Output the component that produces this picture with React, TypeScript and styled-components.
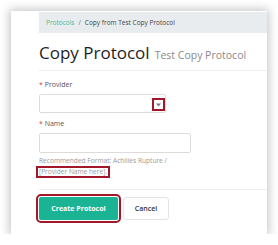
import styled, { createGlobalStyle } from "styled-components";

const GlobalStyle = createGlobalStyle`
    html, body {
        margin: 0;
        padding: 0;
        background: #ffffff;
        font-family: "Open Sans", "Liberation Sans", sans-serif;
    }
`

const annotation = '#a3172a'

export default function App() {
    return (
        <>
            <GlobalStyle />
            <Card>
                <Breadcrumb>
                    <CrumbLink>Protocols</CrumbLink>
                    <CrumbSep>/</CrumbSep>
                    <span>Copy from Test Copy Protocol</span>
                </Breadcrumb>
                <TitleRow>
                    <Title>Copy Protocol</Title>
                    <SubTitle>Test Copy Protocol</SubTitle>
                </TitleRow>
                <Divider $top={3} />
                <Field $top={9}>
                    <Label><Req>*</Req> Provider</Label>
                    <Select $width={127}>
                        <ArrowMark>
                            <svg width="5" height="4" viewBox="0 0 5 4"><path d="M0 0.5 L5 0.5 L2.5 3.5 Z" fill="#777" /></svg>
                        </ArrowMark>
                    </Select>
                </Field>
                <Field $top={6}>
                    <Label><Req>*</Req> Name</Label>
                    <Input $width={152} />
                </Field>
                <Help>
                    <div>Recommended Format: Achilles Rupture /</div>
                    <Marked>[Provider Name here].</Marked>
                </Help>
                <Divider $top={11} />
                <Actions>
                    <PrimaryButton>Create Protocol</PrimaryButton>
                    <DefaultButton>Cancel</DefaultButton>
                </Actions>
            </Card>
        </>
    )
}

const Card = styled.div`
    box-sizing: border-box;
    margin: 11px 0 0 11px;
    width: 256px;
    height: 223px;
    padding: 1px 0 0 28px;
    background: #ffffff;
    box-shadow: 0 0 9px 2px rgba(0, 0, 0, 0.22);
    display: flex;
    flex-direction: column;
`

const Breadcrumb = styled.div`
    height: 21px;
    background: #e9ecef;
    display: flex;
    align-items: center;
    padding-left: 7px;
    font-size: 6.5px;
    color: #444;
`

const CrumbLink = styled.span`
    color: #3fb994;
`

const CrumbSep = styled.span`
    color: #777;
    margin: 0 4px;
`

const TitleRow = styled.div`
    display: flex;
    align-items: baseline;
    gap: 5px;
    margin-top: 8px;
    line-height: 23px;
`

const Title = styled.h1`
    margin: 0;
    font-size: 17px;
    font-weight: 400;
    color: #1e1e1e;
`

const SubTitle = styled.span`
    font-size: 10.5px;
    color: #8a8a8a;
`

const Divider = styled.div<{ $top?: number }>`
    height: 1px;
    background: #eeeeee;
    margin-top: ${p => p.$top ?? 5}px;
`

const Field = styled.div<{ $top: number }>`
    display: flex;
    flex-direction: column;
    gap: 4px;
    margin-top: ${p => p.$top}px;
`

const Label = styled.label`
    font-size: 7px;
    line-height: 10px;
    color: #555;
`

const Req = styled.span`
    color: #e0433c;
`

const Select = styled.div<{ $width: number }>`
    position: relative;
    box-sizing: border-box;
    width: ${p => p.$width}px;
    height: 19px;
    border: 1px solid #dcdcdc;
    border-radius: 2px;
    background: #fff;
`

const ArrowMark = styled.div`
    position: absolute;
    right: 0;
    top: 3px;
    box-sizing: border-box;
    width: 13px;
    height: 13px;
    border: 2px solid ${annotation};
    display: flex;
    align-items: center;
    justify-content: center;
`

const Input = styled.div<{ $width: number }>`
    box-sizing: border-box;
    width: ${p => p.$width}px;
    height: 20px;
    border: 1px solid #dcdcdc;
    border-radius: 2px;
    background: #fff;
`

const Help = styled.div`
    margin-top: 3px;
    font-size: 6.6px;
    line-height: 10px;
    color: #9a9a9a;
`

const Marked = styled.span`
    display: inline-block;
    margin-left: -3px;
    padding: 0 1px 0 1px;
    border: 2px solid ${annotation};
    line-height: 8px;
`

const Actions = styled.div`
    display: flex;
    gap: 5px;
    margin-top: 7px;
`

const PrimaryButton = styled.button`
    width: 79px;
    height: 23px;
    background: #1ab394;
    color: #fff;
    border: none;
    border-radius: 2px;
    font-family: inherit;
    font-size: 7px;
    font-weight: 700;
    outline: 2px solid ${annotation};
    outline-offset: 1px;
`

const DefaultButton = styled.button`
    width: 46px;
    height: 23px;
    background: #fff;
    color: #333;
    border: 1px solid #e2e4e6;
    border-radius: 3px;
    font-family: inherit;
    font-size: 7px;
    font-weight: 600;
`
